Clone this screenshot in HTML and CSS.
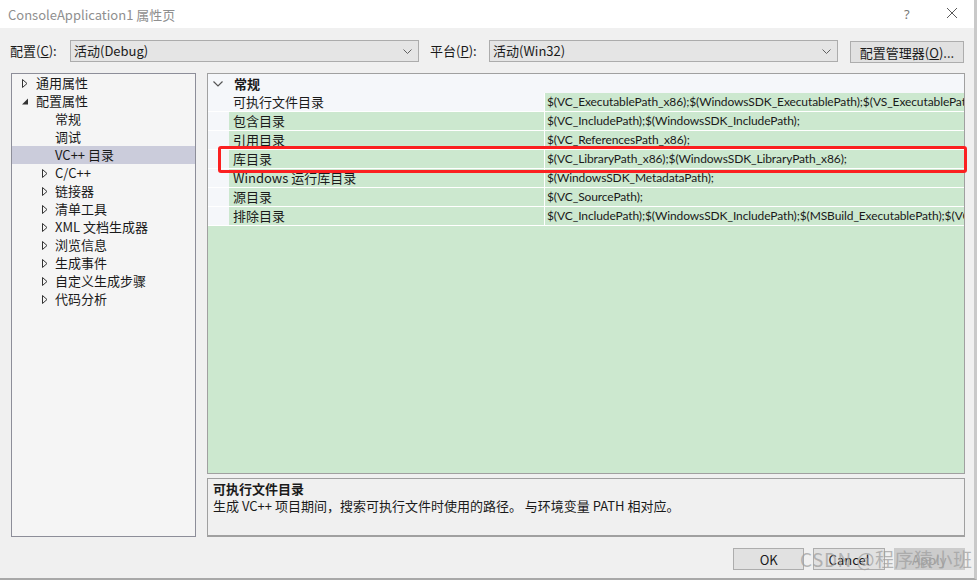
FILE: index.html
```html
<!DOCTYPE html>
<html>
<head>
<meta charset="utf-8">
<link rel="stylesheet" href="styles.css">
</head>
<body>
<div class="dialog">
  <div class="titlebar">
    <span class="title">ConsoleApplication1 属性页</span>
    <span class="help">?</span>
    <svg class="close" width="12" height="12" viewBox="0 0 12 12"><path d="M1 1L11 11M11 1L1 11" stroke="#5a5a5a" stroke-width="1"/></svg>
  </div>

  <div class="toolbar">
    <span class="lbl lbl1">配置(<u>C</u>):</span>
    <div class="combo"><span>活动(Debug)</span><svg class="chev" width="9" height="5" viewBox="0 0 9 5"><path d="M0.5 0.5L4.5 4.5L8.5 0.5" fill="none" stroke="#606060"/></svg></div>
    <span class="lbl lbl2">平台(<u>P</u>):</span>
    <div class="combo"><span>活动(Win32)</span><svg class="chev" width="9" height="5" viewBox="0 0 9 5"><path d="M0.5 0.5L4.5 4.5L8.5 0.5" fill="none" stroke="#606060"/></svg></div>
    <div class="btn cfgbtn">配置管理器(<u>O</u>)...</div>
  </div>

  <div class="main">
    <div class="tree">
      <div class="trow l1"><svg class="tri" width="6" height="9" viewBox="0 0 6 9"><path d="M0.5 0.5L5 4.5L0.5 8.5Z" fill="none" stroke="#333"/></svg><span>通用属性</span></div>
      <div class="trow l1"><svg class="tri" width="6" height="9" viewBox="0 0 6 9"><path d="M6 1.5L6 7.5L0 7.5Z" fill="#333"/></svg><span>配置属性</span></div>
      <div class="trow l2 leaf"><span>常规</span></div>
      <div class="trow l2 leaf"><span>调试</span></div>
      <div class="trow l2 leaf sel"><span>VC++ 目录</span></div>
      <div class="trow l2"><svg class="tri" width="6" height="9" viewBox="0 0 6 9"><path d="M0.5 0.5L5 4.5L0.5 8.5Z" fill="none" stroke="#333"/></svg><span>C/C++</span></div>
      <div class="trow l2"><svg class="tri" width="6" height="9" viewBox="0 0 6 9"><path d="M0.5 0.5L5 4.5L0.5 8.5Z" fill="none" stroke="#333"/></svg><span>链接器</span></div>
      <div class="trow l2"><svg class="tri" width="6" height="9" viewBox="0 0 6 9"><path d="M0.5 0.5L5 4.5L0.5 8.5Z" fill="none" stroke="#333"/></svg><span>清单工具</span></div>
      <div class="trow l2"><svg class="tri" width="6" height="9" viewBox="0 0 6 9"><path d="M0.5 0.5L5 4.5L0.5 8.5Z" fill="none" stroke="#333"/></svg><span>XML 文档生成器</span></div>
      <div class="trow l2"><svg class="tri" width="6" height="9" viewBox="0 0 6 9"><path d="M0.5 0.5L5 4.5L0.5 8.5Z" fill="none" stroke="#333"/></svg><span>浏览信息</span></div>
      <div class="trow l2"><svg class="tri" width="6" height="9" viewBox="0 0 6 9"><path d="M0.5 0.5L5 4.5L0.5 8.5Z" fill="none" stroke="#333"/></svg><span>生成事件</span></div>
      <div class="trow l2"><svg class="tri" width="6" height="9" viewBox="0 0 6 9"><path d="M0.5 0.5L5 4.5L0.5 8.5Z" fill="none" stroke="#333"/></svg><span>自定义生成步骤</span></div>
      <div class="trow l2"><svg class="tri" width="6" height="9" viewBox="0 0 6 9"><path d="M0.5 0.5L5 4.5L0.5 8.5Z" fill="none" stroke="#333"/></svg><span>代码分析</span></div>
    </div>

    <div class="right">
      <div class="grid">
        <div class="ghead">
          <svg class="gchev" width="10" height="6" viewBox="0 0 10 6"><path d="M0.5 0.5L5 5L9.5 0.5" fill="none" stroke="#555" stroke-width="1.2"/></svg>
          <span class="gtitle">常规</span>
        </div>
        <div class="grow first"><div class="gutter"></div><div class="name">可执行文件目录</div><div class="val">$(VC_ExecutablePath_x86);$(WindowsSDK_ExecutablePath);$(VS_ExecutablePath);$(MSBuild_ExecutablePath);$(FxCopDir);$(PATH);</div></div>
        <div class="grow"><div class="gutter"></div><div class="name">包含目录</div><div class="val">$(VC_IncludePath);$(WindowsSDK_IncludePath);</div></div>
        <div class="grow"><div class="gutter"></div><div class="name">引用目录</div><div class="val">$(VC_ReferencesPath_x86);</div></div>
        <div class="grow"><div class="gutter"></div><div class="name">库目录</div><div class="val">$(VC_LibraryPath_x86);$(WindowsSDK_LibraryPath_x86);</div></div>
        <div class="grow"><div class="gutter"></div><div class="name">Windows 运行库目录</div><div class="val">$(WindowsSDK_MetadataPath);</div></div>
        <div class="grow"><div class="gutter"></div><div class="name">源目录</div><div class="val">$(VC_SourcePath);</div></div>
        <div class="grow"><div class="gutter"></div><div class="name">排除目录</div><div class="val">$(VC_IncludePath);$(WindowsSDK_IncludePath);$(MSBuild_ExecutablePath);$(VC_LibraryPath_x86);</div></div>
      </div>
      <div class="desc">
        <div class="dtitle">可执行文件目录</div>
        <div class="dtext">生成 VC++ 项目期间，搜索可执行文件时使用的路径。 与环境变量 PATH 相对应。</div>
      </div>
    </div>
    <div class="redbox"></div>
  </div>

  <div class="footer">
    <div class="btn fbtn">OK</div>
    <div class="btn fbtn">Cancel</div>
    <div class="btn fbtn disabled">Apply</div>
    <div class="watermark">CSDN @程序猿小班</div>
  </div>
</div>
</body>
</html>
```

FILE: styles.css
```css
* { box-sizing: border-box; }
html, body { margin: 0; padding: 0; }
body {
  width: 977px;
  height: 580px;
  overflow: hidden;
  background: #f0f0f0;
  font-family: "Noto Sans CJK SC", "Noto Sans", sans-serif;
  font-size: 13px;
  color: #1a1a1a;
}
.dialog {
  width: 977px;
  height: 580px;
  background: #f0f0f0;
  border-right: 3px solid #c9c9c9;
  border-bottom: 2px solid #a8a8a8;
  position: relative;
}
.titlebar {
  height: 28px;
  background: #ffffff;
  display: flex;
  align-items: center;
  padding-left: 8px;
  position: relative;
}
.title { color: #8f8f8f; font-size: 13px; line-height: 1; }
.help { position: absolute; left: 904px; top: 5px; color: #777; font-size: 13px; font-family: "Noto Sans", sans-serif; }
.close { position: absolute; left: 946px; top: 7px; }

.toolbar {
  height: 45px;
  display: flex;
  align-items: flex-start;
  padding: 12px 0 0 10px;
}
.lbl { line-height: 22px; }
.lbl1 { width: 60px; }
.lbl2 { width: 59px; margin-left: 11px; }
.combo {
  width: 349px;
  height: 22px;
  border: 1px solid #acacac;
  background: #e5e5e5;
  display: flex;
  align-items: center;
  justify-content: space-between;
  padding: 0 6px 0 3px;
  line-height: 20px;
}
.chev { margin-top: 1px; }
.btn {
  border: 1px solid #adadad;
  background: #e1e1e1;
  display: flex;
  align-items: center;
  justify-content: center;
}
.cfgbtn {
  width: 114px;
  height: 22px;
  margin-left: 12px;
  margin-top: 1px;
}

.main {
  position: relative;
  display: flex;
  padding-left: 11px;
  height: 464px;
}
.tree {
  width: 185px;
  height: 464px;
  background: #f5f5f5;
  border: 1px solid #8d8e99;
  padding-top: 0;
}
.trow {
  height: 18px;
  display: flex;
  align-items: center;
  line-height: 18px;
  white-space: nowrap;
}
.trow .tri { flex: none; }
.trow.l1 { padding-left: 10px; }
.trow.l1 .tri { margin-right: 8px; }
.trow.l2 { padding-left: 30px; }
.trow.l2 .tri { margin-right: 7px; }
.trow.leaf { padding-left: 43px; }
.trow.sel { background: #cbccdb; }

.right {
  margin-left: 11px;
  width: 758px;
  display: flex;
  flex-direction: column;
}
.grid {
  height: 401px;
  border: 1px solid #a0a0a0;
  background: #cce8cf;
  overflow: hidden;
}
.ghead {
  height: 19px;
  background: #f5f7fa;
  display: flex;
  align-items: center;
  padding-left: 5px;
}
.gchev { margin-right: 11px; margin-top: 1px; }
.gtitle { font-weight: bold; }
.grow {
  height: 19px;
  display: flex;
  border-bottom: 1px solid #ffffff;
}
.gutter { width: 21px; flex: none; background: #f5f7fa; }
.name {
  width: 316px;
  flex: none;
  padding-left: 4px;
  line-height: 18px;
  border-right: 1px solid #ffffff;
  white-space: nowrap;
}
.grow.first .name { background: #f5f7fa; }
.val {
  flex: 1;
  padding-left: 2px;
  line-height: 18px;
  white-space: nowrap;
  overflow: hidden;
  font-family: "Lato", "Noto Sans CJK SC", sans-serif;
  font-size: 12px;
  letter-spacing: -0.1px;
}
.desc {
  margin-top: 4px;
  height: 59px;
  border: 1px solid #a0a0a0;
  border-bottom: 2px solid #a0a0a0;
  background: #f0f0f0;
  padding: 1px 0 0 5px;
}
.dtitle { font-weight: bold; line-height: 17px; }
.dtext { line-height: 17px; }
.redbox {
  position: absolute;
  left: 218px;
  top: 73px;
  width: 749px;
  height: 27px;
  border: 3px solid #fb2020;
  border-radius: 3px;
}

.footer {
  position: relative;
  display: flex;
  padding: 11px 0 0 733px;
}
.fbtn {
  width: 72px;
  height: 22px;
  margin-right: 9px;
}
.fbtn.disabled {
  background: #cccccc;
  border-color: #cccccc;
  color: #a0a0a0;
}
.watermark {
  position: absolute;
  left: 800px;
  top: 8px;
  font-size: 19px;
  color: rgba(160, 160, 160, 0.75);
  letter-spacing: 0.5px;
  white-space: nowrap;
}
```
